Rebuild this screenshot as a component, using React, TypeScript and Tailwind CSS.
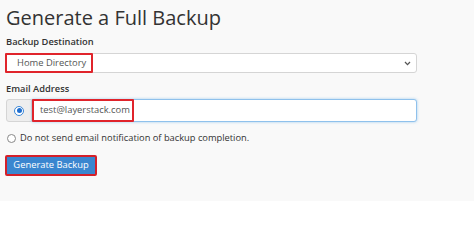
import React from "react";

export default function App() {
  return (
    <div
      className="w-[474px] h-[201px] bg-[#f9f9f9] overflow-hidden pl-[5px] pr-[57px] text-[#333]"
      style={{ fontFamily: '"Open Sans", sans-serif' }}
    >
      <h1 className="text-[20px] leading-[26px] pt-[5px] pl-[1px] font-normal text-[#333]">
        Generate a Full Backup
      </h1>
      <div className="text-[9.3px] leading-[12px] font-semibold mt-[5px] pl-[1px]">Backup Destination</div>
      <div className="mt-[5px] relative h-[20px] bg-white border border-[#d5d5d5] rounded-[3px] flex items-center">
        <div className="absolute left-[-1px] top-[-1px] w-[88px] h-[20px] border-2 border-[#e0242b] rounded-[1px]" />
        <span className="pl-[11px] text-[9.4px] text-[#555]">Home Directory</span>
        <svg className="ml-auto mr-[5px]" width="7" height="5" viewBox="0 0 7 5">
          <path d="M1 1 L3.5 3.6 L6 1" fill="none" stroke="#555" strokeWidth="1.3" />
        </svg>
      </div>
      <div className="text-[9.3px] leading-[12px] font-semibold mt-[10px] pl-[1px]">Email Address</div>
      <div className="mt-[4px] ml-[1px] flex h-[23px]">
        <div className="w-[26px] bg-[#eee] border border-[#d5d5d5] rounded-l-[3px] flex items-center justify-center">
          <div className="w-[10px] h-[10px] rounded-full bg-white border border-[#3b87d6] flex items-center justify-center">
            <div className="w-[5px] h-[5px] rounded-full bg-[#1f6fd0]" />
          </div>
        </div>
        <div className="flex-1 relative bg-white border border-[#8fc1ec] rounded-r-[3px] shadow-[0_0_3px_rgba(102,175,233,0.6)] flex items-center">
          <div className="absolute left-[-1px] top-[-1px] w-[102px] h-[23px] border-2 border-[#e0242b] rounded-[1px]" />
          <span className="pl-[7px] text-[9.4px] text-[#555]">test@layerstack.com</span>
        </div>
      </div>
      <div className="mt-[10px] flex items-center gap-[4px] pl-[2px]">
        <div className="w-[9px] h-[9px] rounded-full border border-[#888] bg-white" />
        <span className="text-[9.3px] leading-[12px] text-[#333]">
          Do not send email notification of backup completion.
        </span>
      </div>
      <div className="mt-[11px] w-[92px] h-[21px] border-2 border-[#d4202a] bg-[#3a86cf] rounded-[2px] flex items-center justify-center">
        <span className="text-[9.4px] text-white">Generate Backup</span>
      </div>
    </div>
  );
}
